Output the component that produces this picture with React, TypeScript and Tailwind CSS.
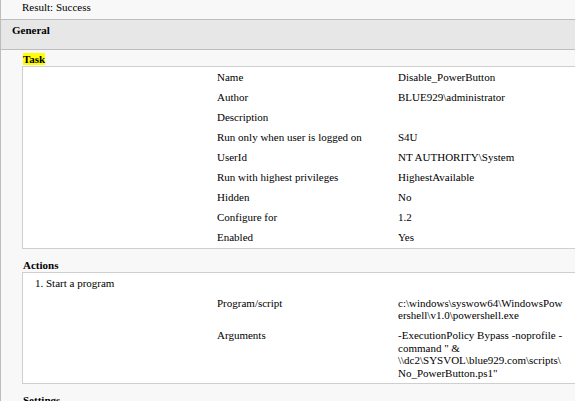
import React from "react";

const taskRows: [string, string][] = [
  ["Name", "Disable_PowerButton"],
  ["Author", "BLUE929\\administrator"],
  ["Description", ""],
  ["Run only when user is logged on", "S4U"],
  ["UserId", "NT AUTHORITY\\System"],
  ["Run with highest privileges", "HighestAvailable"],
  ["Hidden", "No"],
  ["Configure for", "1.2"],
  ["Enabled", "Yes"],
];

const actionRows: [string, string[]][] = [
  ["Program/script", ["c:\\windows\\syswow64\\WindowsPow", "ershell\\v1.0\\powershell.exe"]],
  [
    "Arguments",
    [
      "-ExecutionPolicy Bypass -noprofile -",
      'command " &',
      "\\\\dc2\\SYSVOL\\blue929.com\\scripts\\",
      'No_PowerButton.ps1"',
    ],
  ],
];

const SectionLabel = ({ text, highlight = false, className = "" }: { text: string; highlight?: boolean; className?: string }) => (
  <div className={`ml-[22px] font-bold leading-[13px] ${className}`}>
    <span className={highlight ? "bg-[#ffff00]" : ""}>{text}</span>
  </div>
);

const Row = ({ label, lines }: { label: string; lines: string[] }) => (
  <div className="grid grid-cols-[194px_181px_1fr] py-[3.75px] leading-[12.5px]">
    <div />
    <div className="whitespace-nowrap">{label}</div>
    <div className="whitespace-nowrap">
      {lines.map((l, i) => (
        <div key={i}>{l || "\u00a0"}</div>
      ))}
    </div>
  </div>
);

export default function App() {
  return (
    <div className="w-[575px] h-[401px] overflow-hidden bg-[#f8f8f8] border-l border-[#bdbdbd] font-['Liberation_Serif','Times_New_Roman',serif] text-[11px] text-black">
      <div className="w-[800px]">
        {/* result line */}
        <div className="h-[19px] pl-[21px] pt-[1px] leading-[13px]">Result: Success</div>

        {/* General band */}
        <div className="h-[31px] border-y border-[#bdbdbd] bg-[#e7e7e7] pl-[11px] pt-[4px] font-bold leading-[13px]">
          General
        </div>

        {/* Task */}
        <SectionLabel text="Task" highlight className="mt-[3px]" />
        <div className="ml-[21px] w-[700px] border border-[#cfcfcf] bg-white pb-px">
          {taskRows.map(([label, value]) => (
            <Row key={label} label={label} lines={[value]} />
          ))}
        </div>

        {/* Actions */}
        <SectionLabel text="Actions" className="mt-[10px]" />
        <div className="ml-[21px] w-[700px] border border-[#cfcfcf] bg-white">
          <div className="pl-[12px] py-[3.75px] leading-[12.5px]">1. Start a program</div>
          {actionRows.map(([label, lines]) => (
            <Row key={label} label={label} lines={lines} />
          ))}
        </div>

        {/* Settings */}
        <SectionLabel text="Settings" className="mt-[10px]" />
      </div>
    </div>
  );
}
